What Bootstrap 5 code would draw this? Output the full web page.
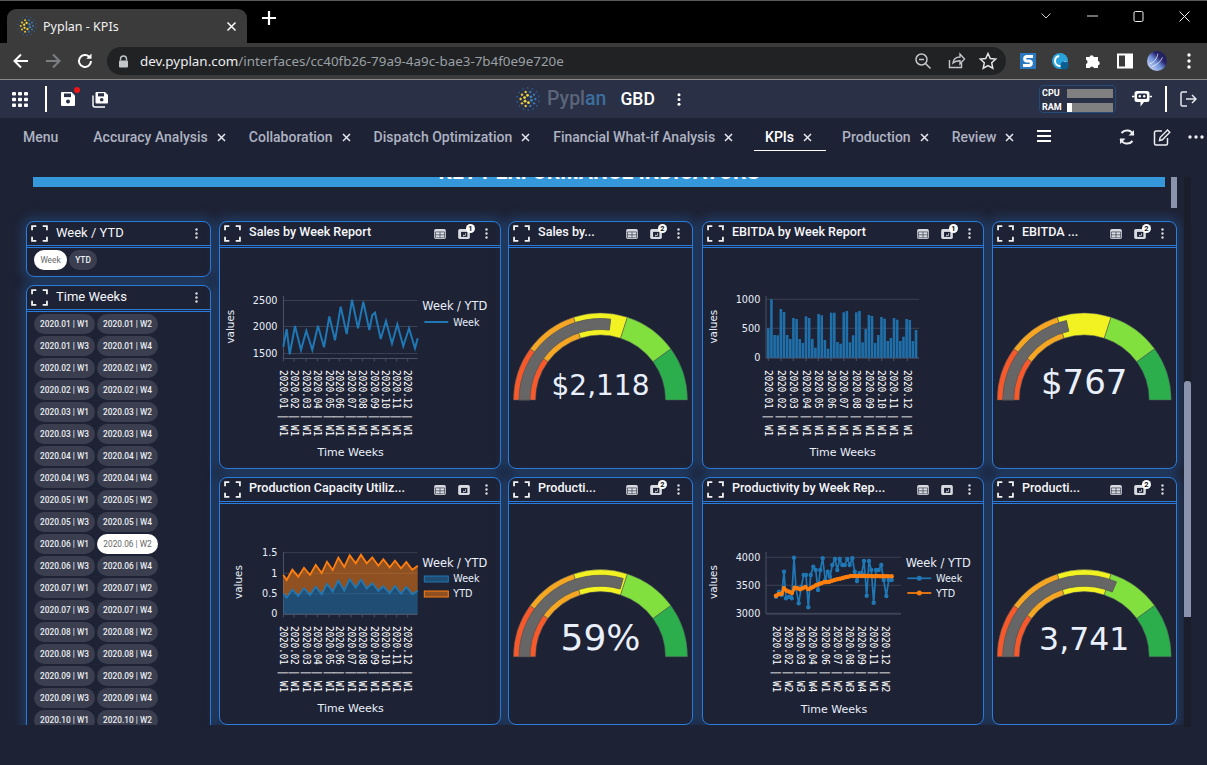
<!doctype html>
<html lang="en">
<head>
<meta charset="utf-8">
<title>Pyplan - KPIs</title>
<link href="https://cdn.jsdelivr.net/npm/bootstrap@5.3.0/dist/css/bootstrap.min.css" rel="stylesheet">
<style>
html,body{height:765px;overflow:hidden;background:#1e2235;font-family:Roboto,"Liberation Sans",sans-serif;color:#fff}
.tabstrip{height:43px;background:#000;border-top:1px solid #5a5a5a;padding-left:7px}
.ctab{width:240px;height:34px;margin-top:8px;background:#3b3b3b;border-radius:9px 9px 0 0;padding:0 10px 0 10px;font:12.5px "Noto Sans","Liberation Sans",sans-serif;color:#f1f1f1}
.ctab-title{margin-left:6px}
.plus-btn{margin-left:13px;margin-top:8px;width:18px}
.caption-btn{width:46px;height:30px}
.toolbar{height:37px;background:#3b3b3b;border-bottom:1px solid #8a8a8a;padding-left:11px;padding-right:9px}
.tool-btn{width:20px;height:20px;flex:none}
.nav-tools{width:32px}
.nav-tools-row{width:96px}
.omni{width:899px;height:28px;background:#212224;border-radius:14px;padding:0 8px 0 11px;font:13.4px "Noto Sans","Liberation Sans",sans-serif;color:#9aa0a6}
.omni b{font-weight:400;color:#eceef1}
.omni-url{margin-left:11px}
.omni-tools{gap:12.5px}
.ext-row{margin-left:12px}
.ext-cell{width:32.3px}
.apphead{height:38px;background:#2a3046;padding:0 10px 0 12px}
.app-left{width:503px}
.vsep{width:2px;height:26px;background:#fff;margin:0 13px 0 17px}
.save-wrap{margin-right:16px}
.dot-red{top:-4px;right:-4px;width:6px;height:6px;background:#f01515}
.logo-word{font-size:19.5px;font-weight:500;margin-left:6px;color:#5b6579}
.logo-word span{color:#3c6e9e}
.gbd{font-size:17.5px;font-weight:500;margin-left:14px}
.head-kebab{margin-left:22px}
.meter{width:77px;height:28px;border:1px solid #234a78;border-radius:4px;padding:0 2px 0 2px;margin-right:16px;font-size:9px;font-weight:700;line-height:14px}
.meter-row{height:14px}
.meter-lab{width:25px;flex:none}
.meter-bar{width:48px;height:9px;background:#808080}
.meter-fill{width:5px;background:#fff}
.sep2{margin:0 13px 0 13px}
.apptabs{height:33px;padding-left:23px;padding-right:2px;font-size:14px;font-weight:500}
.apptabs .nav-link{padding:0;color:#aeb3c2;height:33px;line-height:38px;display:flex;align-items:flex-start;margin-right:23px}
.apptabs .nav-link.first{margin-right:35px}
.apptabs .nav-link.active-tab{color:#fff;border-bottom:1px solid #fff;padding:0 14px 0 11px;margin-left:-2px;margin-right:16px}
.tab-x{width:9px;height:9px;margin-left:9px;margin-top:15px}
.ham{margin-top:12px}
.right-tools{gap:17px;margin-top:10px;padding-right:1px}
.workspace{height:548px;margin-top:26px;padding-left:26px;overflow:hidden}
.banner{width:1132px;height:10px;margin-left:7px;background:#3498db;overflow:hidden;text-align:center;color:#fff;font-size:21px;font-weight:700;line-height:21px}
.banner span{display:block;margin-top:-15.5px}
.kgrid{display:grid;grid-template-columns:193px 289px 194px 290px 185px;grid-template-rows:248px 248px;row-gap:8px;margin-top:34px}
.panel{--bs-card-bg:#1e2235;--bs-card-border-color:#2b7ddd;--bs-card-border-radius:8px;--bs-card-inner-border-radius:7px;box-shadow:0 0 10px 5px rgba(36,84,140,.42);height:248px;flex:none}
.pw{width:282px}.pn{width:185px}
.left-stack{grid-row:1 / span 2;width:185px;height:520px;gap:8px}
.left-stack .panel{width:185px}
.h-small{height:56px!important}
.h-long{height:470px!important}
.phead{height:24px;padding:0 12px 0 4px;background:transparent;border:0;border-bottom:1px solid #2b7ddd;border-radius:7px 7px 0 0!important;margin-bottom:1px;flex:none}
.phead-title{margin-left:8px;padding-bottom:2px;font-size:12.6px;font-weight:500;color:#f6f7fa;white-space:nowrap;flex:1 1 auto}
.left-stack .phead-title{font-size:13px;font-weight:400}
.pbody{padding:0;border-top:1px solid #2b7ddd;flex:1 1 auto;min-height:0}
.chips-body{padding:2px 7px}
.chip-pair{gap:2px}
.chip-grid{display:flex;flex-wrap:wrap;gap:2px;width:130px}
.chip{--bs-btn-padding-x:0;--bs-btn-padding-y:0;--bs-btn-font-size:8.3px;--bs-btn-font-weight:500;--bs-btn-color:#eceef3;--bs-btn-bg:#3a3e4f;--bs-btn-border-width:0;height:20px;width:61px;line-height:20px;white-space:nowrap}
.chip.on{--bs-btn-bg:#fff;--bs-btn-color:#666;background:#fff;color:#666;font-weight:400}
.chip-w{width:33px}.chip-y{width:28px}
.hicon{width:12px;height:10px;flex:none}
.icon-gap{margin-right:12px}
.badged{width:12px;height:10px;margin-right:15px}
.mini-badge{top:-5px;right:-5px;width:9px;height:9px;padding:0;background:#fff;color:#111;font-size:7.5px;line-height:9px;font-weight:700;border-radius:50%}
.kebab{width:3px;height:11px;flex:none}
.v-track{top:177px;width:7px;background:#1a1d2a}
.track-a{left:1184px;height:550px}
.thumb-a{top:381px;left:1184px;width:7px;height:236px;background:#8a93ab;border-radius:3px 3px 0 0}
.thumb-b{top:177px;left:1171px;width:6px;height:31px;background:#8a93ab}
svg text{font-family:"DejaVu Sans",sans-serif;fill:#e9f0fb}
svg text.mono{font-family:"DejaVu Sans Mono",monospace;font-size:9.6px;letter-spacing:-.28px;fill:#fff}
svg{display:block}
</style>
</head>
<body class="position-relative">

<svg width="0" height="0" class="position-absolute">
  <defs>
    <symbol id="i-expand" viewBox="0 0 16 16"><path d="M1 5V1h4M11 1h4v4M15 11v4h-4M5 15H1v-4" fill="none" stroke="#f2f2f2" stroke-width="1.7"/></symbol>
    <symbol id="i-table" viewBox="0 0 14 12"><rect x="0" y="0" width="14" height="12" rx="2" fill="#d8dbe1"/><path d="M1.5 3.500h11v7h-11zM1.500 7h11M7 3.500v7" fill="none" stroke="#1e2235" stroke-width=".7"/></symbol>
    <symbol id="i-dash" viewBox="0 0 14 12"><path d="M2 0h10a2 2 0 0 1 2 2v8a2 2 0 0 1-2 2H2a2 2 0 0 1-2-2V2a2 2 0 0 1 2-2z" fill="#d8dbe1"/><rect x="3.500" y="3.500" width="7.500" height="6" fill="#1e2235"/><path d="M8.800 5v2.800H6.200M6.800 7l-1 .9 1 .9" fill="none" stroke="#d8dbe1" stroke-width=".9"/></symbol>
    <symbol id="i-kebab" viewBox="0 0 3 11"><circle cx="1.500" cy="1.500" r="1.200" fill="#d9dbe0"/><circle cx="1.500" cy="5.500" r="1.200" fill="#d9dbe0"/><circle cx="1.500" cy="9.500" r="1.200" fill="#d9dbe0"/></symbol>
    <symbol id="i-x" viewBox="0 0 9 9"><path d="M1 1l7 7M8 1L1 8" stroke="#e6e8ee" stroke-width="1.500" fill="none"/></symbol>
    <symbol id="i-save" viewBox="0 0 16 16"><path d="M2 1h9.500L15 4.500V14a1 1 0 0 1-1 1H2a1 1 0 0 1-1-1V2a1 1 0 0 1 1-1z" fill="#fff"/><rect x="4" y="2.500" width="7" height="3.600" fill="#2a3046"/><circle cx="8" cy="10.500" r="2" fill="#2a3046"/></symbol>
  </defs>
</svg>

<!-- browser tab strip -->
<div class="tabstrip d-flex align-items-start">
  <div class="ctab d-flex align-items-center">
    <svg width="20" height="20" viewBox="0 0 26 26" class="logo-dots"></svg>
    <span class="ctab-title flex-grow-1">Pyplan - KPIs</span>
    <svg width="11" height="11" viewBox="0 0 11 11"><path d="M1.500 1.500l8 8M9.500 1.500l-8 8" stroke="#fff" stroke-width="1.500"/></svg>
  </div>
  <svg class="plus-btn" width="14" height="18" viewBox="0 0 18 18"><path d="M9 2v14M2 9h14" stroke="#fff" stroke-width="2.200"/></svg>
  <div class="ms-auto d-flex">
    <div class="caption-btn d-flex align-items-center justify-content-center"><svg width="12" height="8" viewBox="0 0 12 8"><path d="M1.500 1.500L6 6l4.500-4.500" fill="none" stroke="#ccc" stroke-width="1"/></svg></div>
    <div class="caption-btn d-flex align-items-center justify-content-center"><svg width="11" height="2" viewBox="0 0 11 2"><path d="M0 1h11" stroke="#ddd"/></svg></div>
    <div class="caption-btn d-flex align-items-center justify-content-center"><svg width="11" height="11" viewBox="0 0 11 11"><rect x="1" y=".5" width="9" height="10" rx="1.500" fill="none" stroke="#eee"/></svg></div>
    <div class="caption-btn d-flex align-items-center justify-content-center"><svg width="11" height="11" viewBox="0 0 11 11"><path d="M.5.5l10 10M10.500.5l-10 10" stroke="#eee"/></svg></div>
  </div>
</div>

<!-- browser toolbar -->
<div class="toolbar d-flex align-items-center">
  <div class="nav-tools-row d-flex">
    <div class="nav-tools"><svg class="tool-btn" viewBox="0 0 20 20"><path d="M17 10H4M10 3.500L3.500 10l6.500 6.500" fill="none" stroke="#fff" stroke-width="2"/></svg></div>
    <div class="nav-tools"><svg class="tool-btn" viewBox="0 0 20 20"><path d="M3 10h13M10 3.500l6.500 6.500-6.500 6.500" fill="none" stroke="#7d7f82" stroke-width="2"/></svg></div>
    <div class="nav-tools"><svg class="tool-btn" viewBox="0 0 20 20"><path d="M16 10a6 6 0 1 1-1.800-4.300" fill="none" stroke="#fff" stroke-width="2"/><path d="M16.500 2.500v5.200h-5.200z" fill="#fff"/></svg></div>
  </div>
  <div class="omni d-flex align-items-center">
    <svg width="11" height="13" viewBox="0 0 11 13"><path d="M2.500 5.500V4a3 3 0 0 1 6 0v1.500" fill="none" stroke="#c4c7c9" stroke-width="1.400"/><rect x="1" y="5.500" width="9" height="7" rx="1" fill="#c4c7c9"/></svg>
    <span class="omni-url flex-grow-1"><b>dev.pyplan.com</b>/interfaces/cc40fb26-79a9-4a9c-bae3-7b4f0e9e720e</span>
    <div class="d-flex omni-tools align-items-center">
      <svg class="tool-btn" viewBox="0 0 20 20"><circle cx="8.500" cy="8.500" r="5.500" fill="none" stroke="#c4c7c9" stroke-width="1.500"/><path d="M6 8.500h5M12.500 12.500l5 5" stroke="#c4c7c9" stroke-width="1.500"/></svg>
      <svg class="tool-btn" viewBox="0 0 20 20"><path d="M3.500 9v7.500h12V12" fill="none" stroke="#c4c7c9" stroke-width="1.400"/><path d="M7 12c.5-4 3.500-6 7-6V3l4.500 5-4.500 5v-3.200c-3 0-5.300.8-7 2.200z" fill="none" stroke="#c4c7c9" stroke-width="1.400"/></svg>
      <svg class="tool-btn" viewBox="0 0 20 20"><path d="M10 2.500l2.300 5 5.400.6-4 3.700 1.100 5.400-4.800-2.700-4.800 2.700 1.100-5.400-4-3.700 5.400-.6z" fill="none" stroke="#e3e4e6" stroke-width="1.500"/></svg>
    </div>
  </div>
  <div class="d-flex ext-row align-items-center">
    <div class="ext-cell"><svg class="tool-btn" viewBox="0 0 20 20"><rect x="2" y="2" width="16" height="16" fill="#2a78c0"/><path d="M15 5.500H8.500a2.300 2.300 0 0 0 0 4.500h3a2.300 2.300 0 0 1 0 4.500H5" fill="none" stroke="#fff" stroke-width="3"/></svg></div>
    <div class="ext-cell"><svg class="tool-btn" viewBox="0 0 20 20"><circle cx="10" cy="10" r="8" fill="#29a3dc"/><circle cx="10" cy="10" r="5" fill="none" stroke="#fff" stroke-width="2" stroke-dasharray="22 10"/><circle cx="14.500" cy="14.500" r="4" fill="#0b5e91"/></svg></div>
    <div class="ext-cell"><svg class="tool-btn" viewBox="0 0 20 20"><path d="M3 6h3.500a2.200 2.200 0 0 1 4.300 0H15v4a2.200 2.200 0 0 1 0 4.300V17H11a2.200 2.200 0 0 0-4.200 0H3v-4a2.200 2.200 0 0 0 0-4.200z" fill="#fff"/></svg></div>
    <div class="ext-cell"><svg class="tool-btn" viewBox="0 0 20 20"><rect x="3" y="3.500" width="14" height="13" fill="none" stroke="#fff" stroke-width="2"/><rect x="10" y="3.500" width="7" height="13" fill="#fff"/></svg></div>
    <div class="ext-cell"><svg class="tool-btn" viewBox="0 0 22 22"><defs><linearGradient id="av" x1="0" y1="1" x2="1" y2="0"><stop offset="0" stop-color="#e8eefb"/><stop offset=".45" stop-color="#6d8fd8"/><stop offset=".65" stop-color="#27246b"/><stop offset="1" stop-color="#1d1a50"/></linearGradient></defs><circle cx="11" cy="11" r="11" fill="url(#av)"/><path d="M3 14c4-1 8-5 9-11M6 17c5-2 9-5 11-10" stroke="#fff" fill="none" stroke-width=".8"/></svg></div>
    <div><svg width="4" height="16" viewBox="0 0 4 16" class="ms-2"><circle cx="2" cy="2" r="1.700" fill="#fff"/><circle cx="2" cy="8" r="1.700" fill="#fff"/><circle cx="2" cy="14" r="1.700" fill="#fff"/></svg></div>
  </div>
</div>

<!-- app header -->
<div class="apphead d-flex align-items-center">
  <div class="app-left d-flex align-items-center">
    <svg width="16" height="15" viewBox="0 0 16 15"><g fill="#fff"><rect x="0" y="0" width="4" height="3.600" rx="1"/><rect x="6" y="0" width="4" height="3.600" rx="1"/><rect x="12" y="0" width="4" height="3.600" rx="1"/><rect x="0" y="5.700" width="4" height="3.600" rx="1"/><rect x="6" y="5.700" width="4" height="3.600" rx="1"/><rect x="12" y="5.700" width="4" height="3.600" rx="1"/><rect x="0" y="11.400" width="4" height="3.600" rx="1"/><rect x="6" y="11.400" width="4" height="3.600" rx="1"/><rect x="12" y="11.400" width="4" height="3.600" rx="1"/></g></svg>
    <div class="vsep"></div>
    <div class="position-relative save-wrap">
      <svg width="16" height="16"><use href="#i-save"/></svg>
      <span class="dot-red position-absolute rounded-circle"></span>
    </div>
    <svg width="17" height="17" viewBox="0 0 17 17"><path d="M4.500 1h8.500L16 4v7.500a1 1 0 0 1-1 1H4.500a1 1 0 0 1-1-1v-9.500a1 1 0 0 1 1-1z" fill="#fff"/><rect x="6" y="2.200" width="6" height="3.200" fill="#2a3046"/><circle cx="9.700" cy="8.800" r="1.800" fill="#2a3046"/><path d="M1 4.500V14a2 2 0 0 0 2 2h10" fill="none" stroke="#fff" stroke-width="1.400"/></svg>
  </div>
  <svg width="26" height="24" viewBox="0 0 26 26" class="logo-dots"></svg>
  <span class="logo-word">Pypl<span>an</span></span>
  <span class="gbd">GBD</span>
  <svg class="head-kebab" width="4" height="13" viewBox="0 0 4 13"><circle cx="2" cy="1.700" r="1.500" fill="#fff"/><circle cx="2" cy="6.500" r="1.500" fill="#fff"/><circle cx="2" cy="11.300" r="1.500" fill="#fff"/></svg>
  <div class="ms-auto d-flex align-items-center">
    <div class="meter">
      <div class="meter-row d-flex align-items-center"><span class="meter-lab">CPU</span><span class="meter-bar d-flex"></span></div>
      <div class="meter-row d-flex align-items-center"><span class="meter-lab">RAM</span><span class="meter-bar d-flex"><span class="meter-fill"></span></span></div>
    </div>
    <svg width="20" height="20" viewBox="0 0 20 20"><path d="M5 2h10a2.500 2.500 0 0 1 2.500 2.500v6A2.500 2.500 0 0 1 15 13h-3l-3.500 4.500V13H5a2.500 2.500 0 0 1-2.500-2.500v-6A2.500 2.500 0 0 1 5 2z" fill="#fff"/><rect x="5" y="4.500" width="10" height="5.500" rx="1.500" fill="#2a3046"/><circle cx="7.800" cy="7.200" r="1.200" fill="#fff"/><circle cx="12.200" cy="7.200" r="1.200" fill="#fff"/><path d="M0 7.500h2.500M17.500 7.500H20" stroke="#fff" stroke-width="1.400"/></svg>
    <div class="vsep sep2"></div>
    <svg width="17" height="16" viewBox="0 0 17 16"><path d="M7 1H2.500A1.500 1.500 0 0 0 1 2.500v11A1.500 1.500 0 0 0 2.500 15H7M6 8h10M12 4l4 4-4 4" fill="none" stroke="#e6e8ee" stroke-width="1.500"/></svg>
  </div>
</div>

<!-- application tabs -->
<nav class="apptabs nav flex-nowrap" id="tabs"></nav>

<!-- workspace -->
<main class="workspace">
  <div class="banner"><span>KEY PERFORMANCE INDICATORS</span></div>
  <div class="kgrid" id="grid"></div>
</main>
<div class="v-track track-a position-absolute"></div>
<div class="thumb-a position-absolute"></div>
<div class="thumb-b position-absolute"></div>

<script src="https://cdn.jsdelivr.net/npm/bootstrap@5.3.0/dist/js/bootstrap.bundle.min.js"></script>
<script>
/* logo dots */
(function(){
  var h='';
  function ring(r,n,f,s,off){for(var i=0;i<n;i++){var a=off+i/n*6.283;h+='<circle cx="'+(13+r*Math.cos(a)).toFixed(1)+'" cy="'+(13+r*Math.sin(a)).toFixed(1)+'" r="'+s+'" fill="'+(typeof f==='function'?f(i,a):f)+'"/>';}}
  ring(12,14,'#2c5a8c',1,0.2);
  ring(8,10,function(i,a){return Math.cos(a)<-.2?'#e8c83c':'#3b78b0';},1.3,0);
  ring(4,6,function(i,a){return Math.cos(a)<.2?'#f2d83c':'#3f86c4';},1.5,0.4);
  document.querySelectorAll('.logo-dots').forEach(function(s){s.innerHTML=h;});
})();

/* tabs */
(function(){
  var names=['Accuracy Analysis','Collaboration','Dispatch Optimization','Financial What-if Analysis','KPIs','Production','Review'];
  var x='<svg class="tab-x"><use href="#i-x"/></svg>';
  var h='<a class="nav-link first" href="#">Menu</a>';
  names.forEach(function(n){h+='<a class="nav-link'+(n==='KPIs'?' active-tab':'')+'" href="#">'+n+x+'</a>';});
  h+='<svg class="ham" width="14" height="12" viewBox="0 0 14 12"><path d="M0 1h14M0 6h14M0 11h14" stroke="#fff" stroke-width="2"/></svg>';
  h+='<div class="ms-auto d-flex right-tools">'+
   '<svg width="18" height="18" viewBox="0 0 18 18"><path d="M15.500 7A7 7 0 0 0 3.500 5M2.500 11a7 7 0 0 0 12 2" fill="none" stroke="#eceef2" stroke-width="2"/><path d="M16 2v5.500h-5.500zM2 16v-5.500h5.500z" fill="#eceef2"/></svg>'+
   '<svg width="18" height="18" viewBox="0 0 18 18"><path d="M9 3H3a1.500 1.500 0 0 0-1.500 1.500v11A1.500 1.500 0 0 0 3 17h10a1.500 1.500 0 0 0 1.500-1.500V10" fill="none" stroke="#eceef2" stroke-width="1.500"/><path d="M6.500 12.500l.6-3L14.500 2l2.300 2.300-7.400 7.500z" fill="none" stroke="#eceef2" stroke-width="1.400"/></svg>'+
   '<svg width="16" height="18" viewBox="0 0 16 18"><circle cx="2" cy="9" r="1.700" fill="#eceef2"/><circle cx="8" cy="9" r="1.700" fill="#eceef2"/><circle cx="14" cy="9" r="1.700" fill="#eceef2"/></svg></div>';
  document.getElementById('tabs').innerHTML=h;
})();

/* ---- charts: coordinates are page pixels, read from 3x crops ---- */
var WEEKS=['2020.01','2020.02','2020.03','2020.04','2020.05','2020.06','2020.07','2020.08','2020.09','2020.10','2020.11','2020.12'];
function z(ox,oy,a){return a.map(function(p){return [(ox+p[0]/3).toFixed(1),(oy+p[1]/3).toFixed(1)].join(',');}).join(' ');}
function xlabels(ox,y,xs,labs,suff){return xs.map(function(v,i){var x=(ox+v/3).toFixed(1);
  return '<text class="mono" x="'+x+'" y="'+y+'" dominant-baseline="central" transform="rotate(90 '+x+' '+y+')">'+labs[i]+' | '+(suff?suff[i]:'W1')+'</text>';}).join('');}
function xticks(ox,y,xs){return xs.map(function(v){var x=ox+v/3;return '<path d="M'+x.toFixed(1)+' '+y+'v3" stroke="#4a5268"/>';}).join('');}
function yaxis(x,top,bot,right,ticks,tx){
  var h='';
  ticks.forEach(function(t){h+='<path d="M'+x+' '+t[1]+'H'+right+'" stroke="#3a4052"/>';
    h+='<text x="'+tx+'" y="'+(t[1]+3.5)+'" text-anchor="end" font-size="9.7">'+t[0]+'</text>';});
  h+='<path d="M'+x+' '+top+'V'+bot+'H'+right+'" fill="none" stroke="#4a5268"/>';
  return h;
}
function axisTitles(vx,vy,tx,ty){
  return '<text x="'+vx+'" y="'+vy+'" text-anchor="middle" font-size="10.4" transform="rotate(-90 '+vx+' '+vy+')">values</text>'+
         '<text x="'+tx+'" y="'+ty+'" text-anchor="middle" font-size="11">Time Weeks</text>';
}
function legTitle(x,y){return '<text x="'+x+'" y="'+y+'" font-size="11.4">Week / YTD</text>';}
function legText(x,y,t){return '<text x="'+x+'" y="'+y+'" font-size="9.6">'+t+'</text>';}

var XS1=[205,237,273,307,342,373,408,442,478,512,545,578];

function salesChart(){
  var pts=[[205,395],[215,342],[224,418],[240,333],[258,405],[274,347],[292,405],[309,332],[327,397],[343,304],[360,376],[377,275],[395,357],[411,254],[429,340],[445,260],[463,345],[472,300],[480,293],[497,372],[513,318],[531,386],[547,328],[565,394],[582,340],[600,400],[608,370]];
  return yaxis(283.5,296,358.5,417.5,[['2500',300.5],['2000',326.5],['1500',353.5]],277.5)+
    xticks(215,358.5,XS1)+
    '<polyline points="'+z(215,215,pts)+'" fill="none" stroke="#1f77b4" stroke-width="2"/>'+
    xlabels(215,370,XS1,WEEKS)+axisTitles(234,326.7,350.7,455.7)+
    legTitle(422.3,310.3)+'<path d="M424.3 322h24" stroke="#1f77b4" stroke-width="2"/>'+legText(453.3,326,'Week');
}
function ebitdaChart(){
  var tops=[340,253,360,361,282,291,360,372,309,312,372,384,304,309,372,398,297,301,375,401,293,293,381,386,292,288,382,361,292,288,382,342,300,303,384,360,306,311,378,369,309,314,378,365,312,315,378,345];
  var b='';
  tops.forEach(function(t,i){var x=700+(201+i*9.43)/3,y=215+t/3;b+='<rect x="'+x.toFixed(2)+'" y="'+y.toFixed(1)+'" width="2.6" height="'+(357.7-y).toFixed(1)+'" fill="#1f77b4" fill-opacity=".92"/>';});
  var xs=[205,243,280,318,355,393,431,469,507,545,581,622];
  return yaxis(766,296,358,919,[['1000',299.3],['500',328.3],['0',357.7]],760.3)+b+
    xticks(700,358,xs)+xlabels(700,370,xs,WEEKS)+axisTitles(717,326.7,842.7,455.7);
}
function capacityChart(){
  var xs=[205,215,232,250,267,285,302,320,336,353,370,388,404,422,438,455,472,490,505,524,540,558,574,592,608];
  var wk=[355,368,344,363,340,360,335,358,327,350,317,347,313,338,314,341,325,348,334,355,333,356,336,358,347];
  var yt=[300,315,284,305,278,300,270,294,260,285,248,276,241,265,239,265,247,272,253,277,257,280,261,284,272];
  var W=xs.map(function(x,i){return [x,wk[i]];}),Y=xs.map(function(x,i){return [x,yt[i]];});
  var base=z(215,475,W);
  var areaW=z(215,475,[[205,416]].concat(W).concat([[608,416]]));
  var areaY=z(215,475,Y.concat(W.slice().reverse()));
  return yaxis(283.5,552,614.5,417.5,[['1.5',552.7],['1',573.3],['0.5',593.7],['0',613.7]],277.5)+
    '<polygon points="'+areaW+'" fill="#1f77b4" fill-opacity=".5"/>'+
    '<polygon points="'+areaY+'" fill="#ff7f0e" fill-opacity=".5"/>'+
    '<polyline points="'+base+'" fill="none" stroke="#1f77b4" stroke-width="1.8"/>'+
    '<polyline points="'+z(215,475,Y)+'" fill="none" stroke="#ff7f0e" stroke-width="1.8"/>'+
    xticks(215,614.5,XS1)+xlabels(215,626,XS1,WEEKS)+axisTitles(242,582,350.7,711.7)+
    legTitle(422.3,566.7)+
    '<rect x="424.3" y="576" width="24" height="6" fill="#1f77b4" fill-opacity=".5" stroke="#1f77b4"/>'+legText(453.3,582,'Week')+
    '<rect x="424.3" y="591" width="24" height="6" fill="#ff7f0e" fill-opacity=".5" stroke="#ff7f0e"/>'+legText(453.3,597,'YTD');
}
function prodChart(){
  var wk=[[228,365],[237,350],[245,360],[252,290],[258,370],[267,365],[275,370],[282,248],[288,340],[296,385],[304,335],[311,300],[318,300],[325,397],[332,300],[340,275],[347,285],[354,345],[361,285],[368,250],[376,315],[383,290],[390,305],[397,270],[405,252],[412,285],[419,252],[427,270],[434,270],[442,252],[449,270],[457,250],[464,290],[471,318],[479,295],[485,295],[492,258],[500,362],[507,258],[514,285],[521,383],[528,285],[536,285],[544,270],[551,315],[559,363],[566,315],[575,315]];
  var yt=[[228,362],[236,358],[245,356],[252,340],[260,347],[268,350],[276,354],[284,338],[292,340],[300,343],[308,340],[316,336],[324,342],[332,340],[340,335],[348,331],[356,328],[364,325],[372,322],[380,321],[388,320],[396,317],[404,315],[412,313],[420,311],[428,309],[436,307],[444,305],[452,303],[460,303],[468,303],[476,303],[484,303],[492,303],[500,303],[508,303],[516,304],[524,304],[532,303],[540,304],[548,304],[556,304],[564,304],[575,304]];
  function marks(a,r,c){return a.map(function(p){return '<circle cx="'+(700+p[0]/3).toFixed(1)+'" cy="'+(475+p[1]/3).toFixed(1)+'" r="'+r+'" fill="'+c+'"/>';}).join('');}
  var xs=[228,264,301,338,375,412,448,484,520,557];
  var labs=['2020.01','2020.02','2020.03','2020.04','2020.06','2020.07','2020.08','2020.09','2020.11','2020.12'];
  var suf=['W1','W2','W3','W4','W1','W2','W3','W4','W1','W2'];
  return yaxis(766,552,614,901,[['4000',557.3],['3500',585.3],['3000',613.3]],760.3)+
    '<polyline points="'+z(700,475,wk)+'" fill="none" stroke="#1f77b4" stroke-width="1.7"/>'+marks(wk,2.2,'#1f77b4')+
    '<polyline points="'+z(700,475,yt)+'" fill="none" stroke="#ff7f0e" stroke-width="3"/>'+marks(yt,2.2,'#ff7f0e')+
    xlabels(700,626,xs,labs,suf)+axisTitles(717,582,834,712.7)+
    legTitle(905.7,566.7)+
    '<path d="M907.3 578.3h24" stroke="#1f77b4" stroke-width="1.7"/><circle cx="919.3" cy="578.3" r="2.5" fill="#1f77b4"/>'+legText(936,582,'Week')+
    '<path d="M907.3 593h24" stroke="#ff7f0e" stroke-width="1.7"/><circle cx="919.3" cy="593" r="2.5" fill="#ff7f0e"/>'+legText(936,597,'YTD');
}
function annulus(cx,cy,R,r,f0,f1){
  function pt(rad,f){var a=Math.PI*(1-f);return (cx+rad*Math.cos(a)).toFixed(2)+' '+(cy-rad*Math.sin(a)).toFixed(2);}
  return 'M'+pt(R,f0)+'A'+R+' '+R+' 0 0 1 '+pt(R,f1)+'L'+pt(r,f1)+'A'+r+' '+r+' 0 0 0 '+pt(r,f0)+'Z';
}
function gauge(cx,cy,val,txt,size,base){
  var steps=[[0,.2,'#f7592a'],[.2,.4,'#f5a623'],[.4,.6,'#f2f222'],[.6,.8,'#82e03e'],[.8,1,'#2bae4b']];
  var h='';
  steps.forEach(function(s){h+='<path d="'+annulus(cx,cy,87,65,s[0],s[1])+'" fill="'+s[2]+'" stroke="#555a5a" stroke-width=".5"/>';});
  h+='<path d="'+annulus(cx,cy,81.5,70.5,0,val)+'" fill="#666" stroke="#555" stroke-width=".8"/>';
  h+='<text x="'+cx+'" y="'+base+'" text-anchor="middle" font-size="'+size+'">'+txt+'</text>';
  return h;
}

function panel(o){
  var icons='';
  if(o.gridIcons){
    icons='<svg class="hicon icon-gap"><use href="#i-table"/></svg>'+
      '<span class="badged position-relative d-inline-block"><svg class="hicon"><use href="#i-dash"/></svg>'+
      (o.badge?'<span class="badge mini-badge position-absolute">'+o.badge+'</span>':'')+'</span>';
  }
  var head='<div class="card-header phead d-flex align-items-center">'+
    '<svg width="17" height="17"><use href="#i-expand"/></svg>'+
    '<span class="phead-title">'+o.title+'</span>'+icons+
    '<svg class="kebab"><use href="#i-kebab"/></svg></div>';
  return '<div class="card panel '+(o.cls||'')+'">'+head+'<div class="card-body pbody">'+o.body+'</div></div>';
}
function svgFor(x,y,w,h,inner){return '<svg width="'+w+'" height="'+h+'" viewBox="'+x+' '+y+' '+w+' '+h+'">'+inner+'</svg>';}

var chips='';
var sel='2020.06 | W2';
for(var m=1;m<=10;m++){for(var k=1;k<=4;k++){
  if(m===10&&k>2)break;
  var t='2020.'+(m<10?'0':'')+m+' | W'+k;
  chips+='<button type="button" class="btn chip rounded-pill'+(t===sel?' on':'')+'">'+t+'</button>';
}}
var left='<div class="left-stack d-flex flex-column">'+
  panel({title:'Week / YTD',cls:'h-small',body:'<div class="chips-body chip-pair d-flex"><button type="button" class="btn chip chip-w rounded-pill on">Week</button><button type="button" class="btn chip chip-y rounded-pill">YTD</button></div>'})+
  panel({title:'Time Weeks',cls:'h-long',body:'<div class="chips-body"><div class="chip-grid">'+chips+'</div></div>'})+
  '</div>';

var cx1=600.5,cx2=1084.2;
document.getElementById('grid').innerHTML=left+
 panel({title:'Sales by Week Report',cls:'pw',gridIcons:1,badge:'1',body:svgFor(220,248,280,220,salesChart())})+
 panel({title:'Sales by...',cls:'pn',gridIcons:1,badge:'2',body:svgFor(509,248,183,220,gauge(cx1,400,.54,'$2,118',28,395))})+
 panel({title:'EBITDA by Week Report',cls:'pw',gridIcons:1,badge:'1',body:svgFor(703,248,280,220,ebitdaChart())})+
 panel({title:'EBITDA ...',cls:'pn',gridIcons:1,badge:'2',body:svgFor(993,248,183,220,gauge(cx2,400,.43,'$767',34,394))})+
 panel({title:'Production Capacity Utiliz...',cls:'pw',gridIcons:1,body:svgFor(220,504,280,220,capacityChart())})+
 panel({title:'Producti...',cls:'pn',gridIcons:1,badge:'2',body:svgFor(509,504,183,220,gauge(cx1,656.7,.59,'59%',36,650))})+
 panel({title:'Productivity by Week Rep...',cls:'pw',gridIcons:1,body:svgFor(703,504,280,220,prodChart())})+
 panel({title:'Producti...',cls:'pn',gridIcons:1,badge:'2',body:svgFor(993,504,183,220,gauge(cx2,656.7,.63,'3,741',31.5,650))});
</script>
</body>
</html>
